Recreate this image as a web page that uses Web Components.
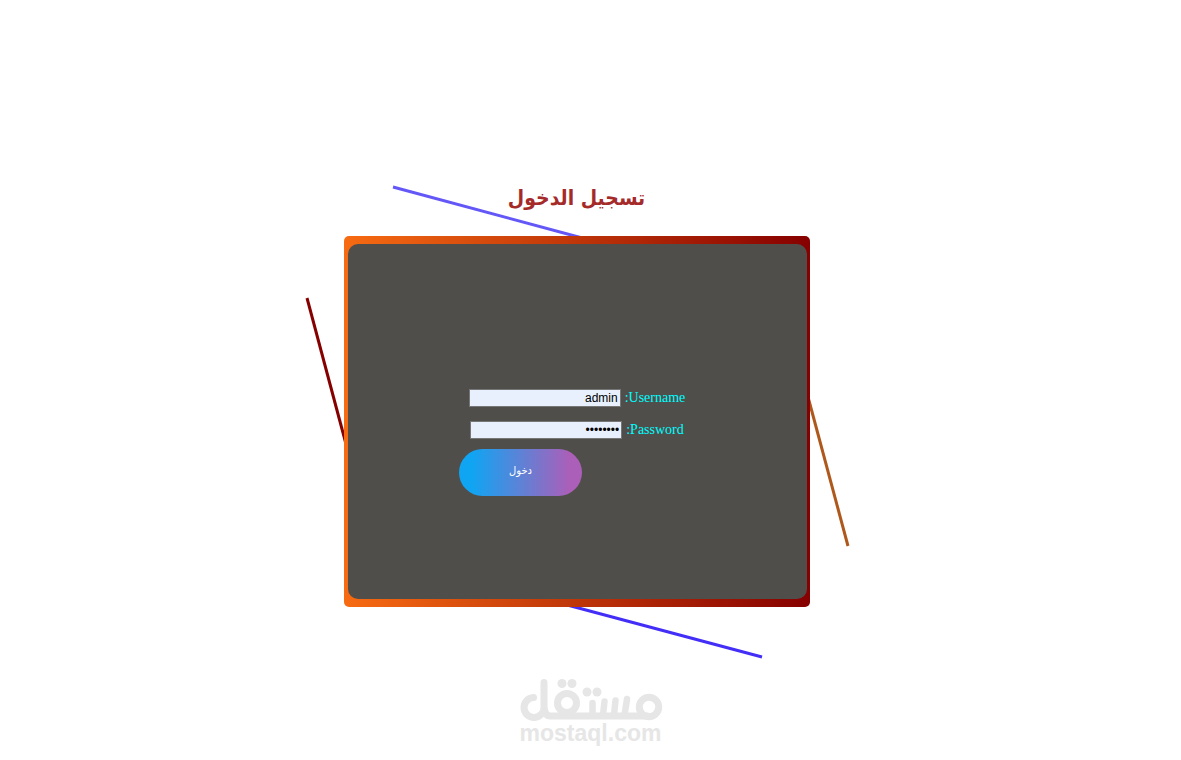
<!DOCTYPE html>
<html lang="ar" dir="rtl">
<head>
<meta charset="utf-8">
<title>تسجيل الدخول</title>
<style>
body { margin: 0; background: #fff; font-family: "Liberation Serif", "DejaVu Sans", serif; }
</style>
</head>
<body>
<login-page>
  <login-card>
    <login-field label="Username" name="username" type="text" value="admin"></login-field>
    <login-field label="Password" name="password" type="password" value="password"></login-field>
    <login-button>دخول</login-button>
  </login-card>
</login-page>
<script>
class BaseElement extends HTMLElement {
  constructor() {
    super();
    this.attachShadow({ mode: "open" }).innerHTML = this.constructor.markup;
  }
}

class LoginPage extends BaseElement {
  static markup = `
    <style>
      :host { display: flex; flex-direction: column; align-items: center; box-sizing: border-box; min-height: 100vh; padding-top: 180px; overflow: hidden; }
      main { display: flex; flex-direction: column; align-items: center; width: 100%; box-sizing: border-box; padding-right: 28px; }
      h1 { position: relative; z-index: 1; margin: 0; height: 56px; line-height: 36px; font-size: 21px; font-weight: 700; color: brown; font-family: "DejaVu Sans Condensed", "DejaVu Sans", sans-serif; }
      site-mark { margin-top: 72px; }
    </style>
    <main><h1>تسجيل الدخول</h1><slot></slot></main>
    <site-mark></site-mark>`;
}

class LoginCard extends BaseElement {
  static markup = `
    <style>
      :host { display: block; position: relative; width: 466px; max-width: 100%; direction: rtl; }
      svg { position: absolute; left: -44px; top: -56px; width: 560px; height: 484px; }
      .frame { position: relative; padding: 8px 3px 8px 4px; border-radius: 5px; background: linear-gradient(to right, #f76b12, #860000); }
      form { display: flex; flex-direction: column; align-items: center; border-radius: 10px; background: #504e4b; padding: 144px 0 103px; gap: 12px; }
      ::slotted(login-button) { margin-top: -3px; }
    </style>
    <svg viewBox="300 180 560 484" fill="none" stroke-width="3" aria-hidden="true">
      <path d="M393 187L586 239" stroke="#6358f7"/>
      <path d="M307 298L350 459" stroke="#860000"/>
      <path d="M804 382L848 546" stroke="#ae581c"/>
      <path d="M556 602L762 657" stroke="#432ef7"/>
    </svg>
    <div class="frame"><form><slot></slot></form></div>`;
}

class LoginField extends BaseElement {
  static markup = `
    <style>
      :host { display: flex; align-items: center; gap: 4px; height: 20px; }
      label { color: #0ff; font-size: 14px; line-height: 20px; }
      input { box-sizing: border-box; width: 152px; height: 18px; margin: 0; padding: 0 2px; border: 1px solid #767676; border-radius: 0; background: #e8f0fe; color: #000; font: 12px "Liberation Sans", sans-serif; }
    </style>
    <label for="box"></label><input id="box">`;
  connectedCallback() {
    const input = this.shadowRoot.querySelector("input");
    this.shadowRoot.querySelector("label").textContent = this.getAttribute("label") + ":";
    input.type = this.getAttribute("type");
    input.name = this.getAttribute("name");
    input.value = this.getAttribute("value");
  }
}

class LoginButton extends BaseElement {
  static markup = `
    <style>
      :host { display: flex; justify-content: flex-end; width: 236px; }
      button { width: 123px; height: 47px; padding: 0 0 4px; border: 0; border-radius: 24px; color: #fff; background: linear-gradient(to right, #0fa5f3 10%, #ab5fb9 90%); font: 11px "DejaVu Sans Condensed", "DejaVu Sans", sans-serif; }
    </style>
    <button type="button"><slot></slot></button>`;
}

class SiteMark extends BaseElement {
  static markup = `
    <style>
      :host { display: flex; flex-direction: column; align-items: center; direction: ltr; color: #e6e6e6; }
      svg { display: block; width: 144px; height: 42px; }
      span { font: 700 23px/24px "Liberation Sans", sans-serif; }
    </style>
    <svg viewBox="518 680 144 42" fill="none" stroke="currentColor" stroke-width="7" stroke-linecap="round" stroke-linejoin="round" aria-hidden="true">
      <path d="M532.500 698.500A10 10 0 1 0 543 708V683.500M543 708Q544 717 549 717H646"/>
      <circle cx="566" cy="704" r="9.500"/>
      <circle cx="648" cy="708" r="9.700"/>
      <path d="M591.500 704V716M603.500 702.500L602 716M614.500 701.500L613 716M626 700L623.500 716" stroke-width="6.500"/>
      <g fill="currentColor" stroke="none"><circle cx="561" cy="684.500" r="4.500"/><circle cx="571" cy="684.500" r="4.500"/><circle cx="586" cy="693" r="4.500"/><circle cx="596" cy="693" r="4.500"/></g>
    </svg>
    <span>mostaql.com</span>`;
}

customElements.define("site-mark", SiteMark);
customElements.define("login-button", LoginButton);
customElements.define("login-field", LoginField);
customElements.define("login-card", LoginCard);
customElements.define("login-page", LoginPage);
</script>
</body>
</html>
